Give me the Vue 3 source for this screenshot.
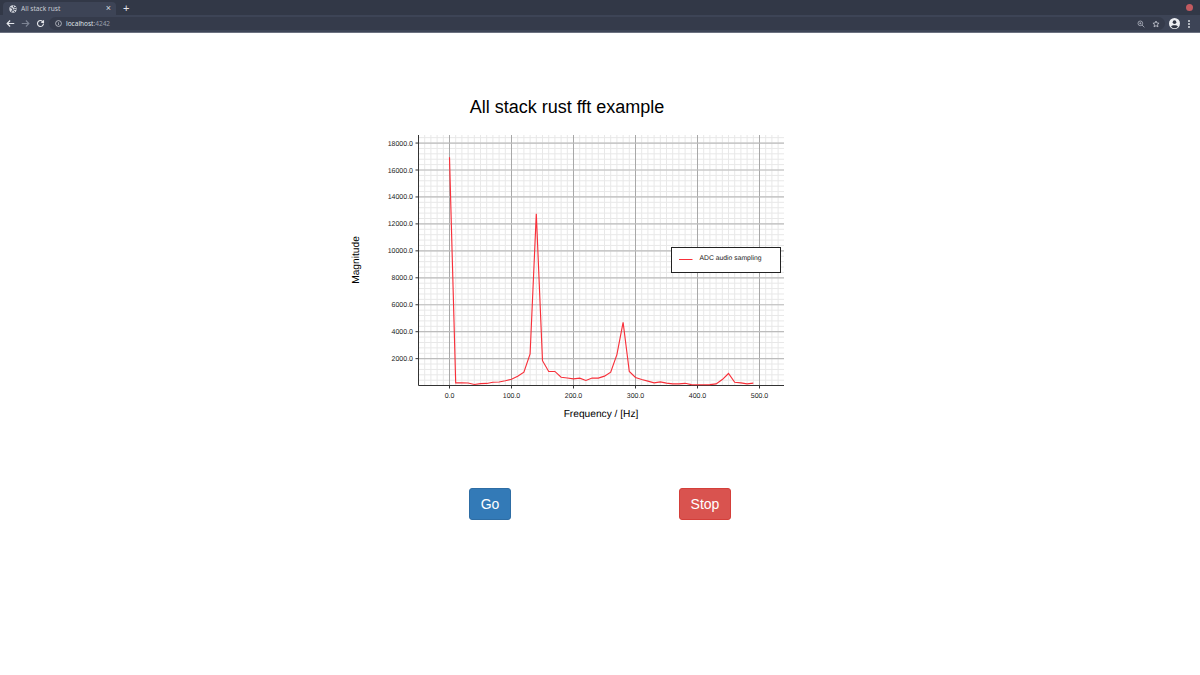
<template>
  <div class="page">
    <header class="browser">
      <div class="tabstrip">
        <div class="tab">
          <svg class="favicon" width="8" height="8" viewBox="0 0 24 24">
            <circle cx="12" cy="12" r="11" fill="#d5d8df" />
            <path d="M4 8l6 2 2 5-3 1-1 6M14 2l-1 4 4 2 5-1M22 14l-5-2-3 4 3 5" fill="none" stroke="#3d4456" stroke-width="3" />
          </svg>
          <span class="tab-title">All stack rust</span>
          <span class="tab-close">×</span>
        </div>
        <span class="new-tab">+</span>
        <span class="window-dot"></span>
      </div>
      <div class="toolbar">
        <svg class="nav" width="9" height="9" viewBox="0 0 24 24" fill="none" stroke="#e4e6eb" stroke-width="3">
          <path d="M22 12H3M11 4l-8 8 8 8" />
        </svg>
        <svg class="nav" width="9" height="9" viewBox="0 0 24 24" fill="none" stroke="#7d8494" stroke-width="3">
          <path d="M2 12h19M13 4l8 8-8 8" />
        </svg>
        <svg class="nav" width="9" height="9" viewBox="0 0 24 24" fill="none" stroke="#e4e6eb" stroke-width="3">
          <path d="M20 12a8 8 0 1 1-2.400-5.700L20 9M20 3v6h-6" />
        </svg>
        <div class="omnibox">
          <svg width="7" height="7" viewBox="0 0 24 24" fill="none" stroke="#d5d8df" stroke-width="2.500">
            <circle cx="12" cy="12" r="10" />
            <path d="M12 11v6M12 7v2" />
          </svg>
          <span class="url">localhost<span class="port">:4242</span></span>
          <svg class="omni-right" width="8" height="8" viewBox="0 0 24 24" fill="none" stroke="#a9aebb" stroke-width="2.500">
            <circle cx="10" cy="10" r="7" />
            <path d="M15 15l7 7M7 10h6M10 7v6" />
          </svg>
          <svg width="8" height="8" viewBox="0 0 24 24" fill="none" stroke="#c3c7d0" stroke-width="2.500">
            <path d="M12 3l2.800 6 6.400.7-4.800 4.300 1.400 6.500L12 17l-5.800 3.500 1.400-6.500-4.800-4.300 6.400-.7z" />
          </svg>
        </div>
        <svg class="avatar" width="11" height="11" viewBox="0 0 24 24">
          <circle cx="12" cy="12" r="12" fill="#eceef2" />
          <circle cx="12" cy="9" r="4" fill="#2f3543" />
          <path d="M4.500 19c1.500-4 13.500-4 15 0a11 11 0 0 1-15 0z" fill="#2f3543" />
        </svg>
        <span class="menu"><i></i><i></i><i></i></span>
      </div>
    </header>

    <main class="content">
      <svg class="plot" width="526" height="355" viewBox="337 85 526 355">
        <text x="567" y="113" class="plot-title" text-anchor="middle">All stack rust fft example</text>

        <line v-for="x in minorX" :key="'mx' + x" :x1="x" :x2="x" :y1="top" :y2="bottom" class="grid-minor" />
        <line v-for="y in minorY" :key="'my' + y" :x1="left" :x2="right" :y1="y" :y2="y" class="grid-minor" />
        <line v-for="t in xTicks" :key="'gx' + t" :x1="xPos(t)" :x2="xPos(t)" :y1="top" :y2="bottom" class="grid-major" />
        <line v-for="t in yTicks" :key="'gy' + t" :x1="left" :x2="right" :y1="yPos(t)" :y2="yPos(t)" class="grid-major grid-major-h" />

        <line :x1="left" :x2="left" :y1="top" :y2="bottom" class="axis" />
        <line :x1="left" :x2="right" :y1="bottom" :y2="bottom" class="axis" />

        <g v-for="t in xTicks" :key="'tx' + t">
          <line :x1="xPos(t)" :x2="xPos(t)" :y1="bottom" :y2="bottom + 3" class="axis" />
          <text :x="xPos(t)" y="397.500" class="tick" text-anchor="middle">{{ t.toFixed(1) }}</text>
        </g>
        <g v-for="t in yTicks" :key="'ty' + t">
          <line :x1="left - 3" :x2="left" :y1="yPos(t)" :y2="yPos(t)" class="axis" />
          <text x="413" :y="yPos(t) + 2.500" class="tick" text-anchor="end">{{ t.toFixed(1) }}</text>
        </g>

        <polyline :points="linePoints" class="trace" />

        <text x="601" y="417" class="axis-label" text-anchor="middle">Frequency / [Hz]</text>
        <text class="axis-label" text-anchor="middle" transform="translate(358.500 260) rotate(-90)">Magnitude</text>

        <rect x="671.500" y="247.500" width="109" height="25" class="legend-box" />
        <line x1="679" x2="692.500" y1="259.500" y2="259.500" class="legend-line" />
        <text x="699.500" y="259.500" class="tick legend-text">ADC audio sampling</text>
      </svg>

      <div class="actions">
        <button class="btn btn-go">Go</button>
        <button class="btn btn-stop">Stop</button>
      </div>
    </main>
  </div>
</template>

<script setup>
import { computed } from 'vue'

const left = 418.5
const right = 784
const top = 135
const bottom = 385.5

// 0 Hz sits at x=449.5, 100 Hz every 62px
const xPos = (hz) => 449.5 + hz * 0.62
const yPos = (mag) => 385.6 - mag * 0.013475

const xTicks = [0, 100, 200, 300, 400, 500]
const yTicks = [2000, 4000, 6000, 8000, 10000, 12000, 14000, 16000, 18000]

const magnitudes = [
  16950, 200, 200, 190, 80, 150, 160, 250, 270, 360,
  470, 700, 1000, 2350, 12750, 1850, 1050, 1050, 620, 560,
  500, 550, 380, 560, 560, 700, 1000, 2300, 4700, 1050,
  600, 450, 330, 200, 280, 180, 130, 130, 170, 70,
  60, 60, 70, 130, 450, 900, 250, 200, 130, 180
]

const minorX = computed(() => {
  const lines = []
  for (let hz = -50; hz <= 540; hz += 10) lines.push(xPos(hz))
  return lines.filter((x) => x > left && x <= right)
})

const minorY = computed(() => {
  const lines = []
  for (let mag = 0; mag <= 18600; mag += 400) lines.push(yPos(mag))
  return lines.filter((y) => y >= top && y < bottom)
})

const linePoints = computed(() =>
  magnitudes.map((mag, i) => `${xPos(i * 10)},${yPos(mag)}`).join(' ')
)
</script>

<style>
html,
body {
  margin: 0;
  background: #fff;
}
</style>

<style scoped>
.page {
  width: 1200px;
  height: 675px;
  overflow: hidden;
  font-family: "Liberation Sans", Arial, sans-serif;
  background: #fff;
}

.browser {
  background: #323847;
  border-bottom: 1px solid #6b7180;
}

.tabstrip {
  display: flex;
  align-items: flex-end;
  height: 15px;
  padding-left: 3px;
}

.tab {
  display: flex;
  align-items: center;
  gap: 4px;
  width: 113px;
  height: 13px;
  box-sizing: border-box;
  padding: 0 5px 0 6px;
  background: #3d4456;
  border-radius: 4px 4px 0 0;
}

.tab-title {
  flex: 1;
  font-family: "Noto Sans", sans-serif;
  font-size: 6.600px;
  color: #c9ccd4;
}

.tab-close {
  font-size: 9px;
  line-height: 9px;
  color: #d5d8df;
}

.new-tab {
  margin-left: 7px;
  margin-bottom: 1px;
  font-size: 11px;
  line-height: 11px;
  color: #e4e6eb;
}

.window-dot {
  width: 7px;
  height: 7px;
  margin-left: auto;
  margin-right: 7px;
  margin-bottom: 4px;
  border-radius: 50%;
  background: #c25a60;
}

.toolbar {
  display: flex;
  align-items: center;
  height: 17px;
  padding-left: 6px;
  background: #3d4456;
}

.nav {
  margin-right: 6px;
}

.omnibox {
  display: flex;
  flex: 1;
  align-items: center;
  gap: 4px;
  height: 13px;
  margin-left: -2px;
  padding: 0 5px 0 6px;
  border-radius: 7px;
  background: #353b4b;
}

.url {
  font-family: "Noto Sans", sans-serif;
  font-size: 6.500px;
  color: #dfe1e6;
}

.port {
  color: #9a9fac;
}

.omni-right {
  margin-left: auto;
  margin-right: 3px;
}

.avatar {
  margin-left: 4px;
}

.menu {
  display: flex;
  flex-direction: column;
  gap: 1px;
  margin: 0 10px 0 8px;
}

.menu i {
  display: block;
  width: 2px;
  height: 2px;
  border-radius: 50%;
  background: #d5d8df;
}

.content {
  display: flex;
  flex-direction: column;
  align-items: center;
  padding-top: 52px;
}

.plot {
  display: block;
}

.plot-title {
  font-size: 18px;
  fill: #000;
}

.grid-minor {
  stroke: #e8e8e8;
  stroke-width: 1;
}

.grid-major {
  stroke: #a8a8a8;
  stroke-width: 1;
}

.grid-major-h {
  stroke: #bcbcbc;
  stroke-width: 1.200;
}

.axis {
  stroke: #333;
  stroke-width: 1;
}

.tick {
  font-size: 7px;
  fill: #222;
  text-rendering: geometricPrecision;
}

.legend-text {
  font-size: 6.800px;
}

.axis-label {
  font-size: 10.200px;
  fill: #000;
  text-rendering: geometricPrecision;
}

.trace {
  fill: none;
  stroke: #f8303a;
  stroke-width: 1.150;
}

.legend-box {
  fill: #fff;
  stroke: #222;
  stroke-width: 1;
}

.legend-line {
  stroke: #f8303a;
  stroke-width: 1;
}

.actions {
  display: flex;
  gap: 168px;
  margin-top: 48px;
}

.btn {
  height: 32px;
  padding: 0;
  border: 1px solid;
  border-radius: 3px;
  font-family: "Liberation Sans", Arial, sans-serif;
  font-size: 14px;
  color: #fff;
}

.btn-go {
  width: 42px;
  background: #337ab7;
  border-color: #2e6da4;
}

.btn-stop {
  width: 52px;
  background: #d9534f;
  border-color: #d43f3a;
}
</style>
